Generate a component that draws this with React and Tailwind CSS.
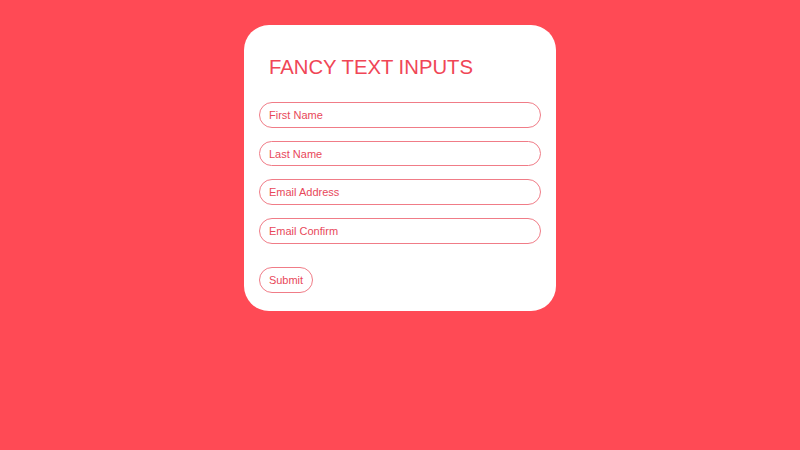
import React from "react";

const fields = ["First Name", "Last Name", "Email Address", "Email Confirm"];

export default function App() {
  return (
    <div
      className="w-[800px] h-[450px] bg-[#ff4a55] flex justify-center items-start pt-[25px]"
      style={{ fontFamily: '"Liberation Sans", Arial, sans-serif' }}
    >
      <div className="w-[312px] bg-white rounded-[25px] px-[15px] pt-[28px] pb-[18.5px] flex flex-col">
        <h1 className="ml-[10px] text-[20.3px] leading-[28px] text-[#f04656] font-normal">
          FANCY TEXT INPUTS
        </h1>
        <div className="mt-[21px] flex flex-col gap-[13px]">
          {fields.map((f) => (
            <input
              key={f}
              placeholder={f}
              className="w-[282px] h-[25.7px] rounded-full border border-[#f07c87] px-[9px] text-[11px] text-[#e8485a] placeholder:text-[#e8485a] outline-none bg-white"
            />
          ))}
        </div>
        <div className="mt-[23px]">
          <button className="w-[54px] h-[25.8px] rounded-full border border-[#f07c87] text-[11px] text-[#e8485a] bg-white">
            Submit
          </button>
        </div>
      </div>
    </div>
  );
}
